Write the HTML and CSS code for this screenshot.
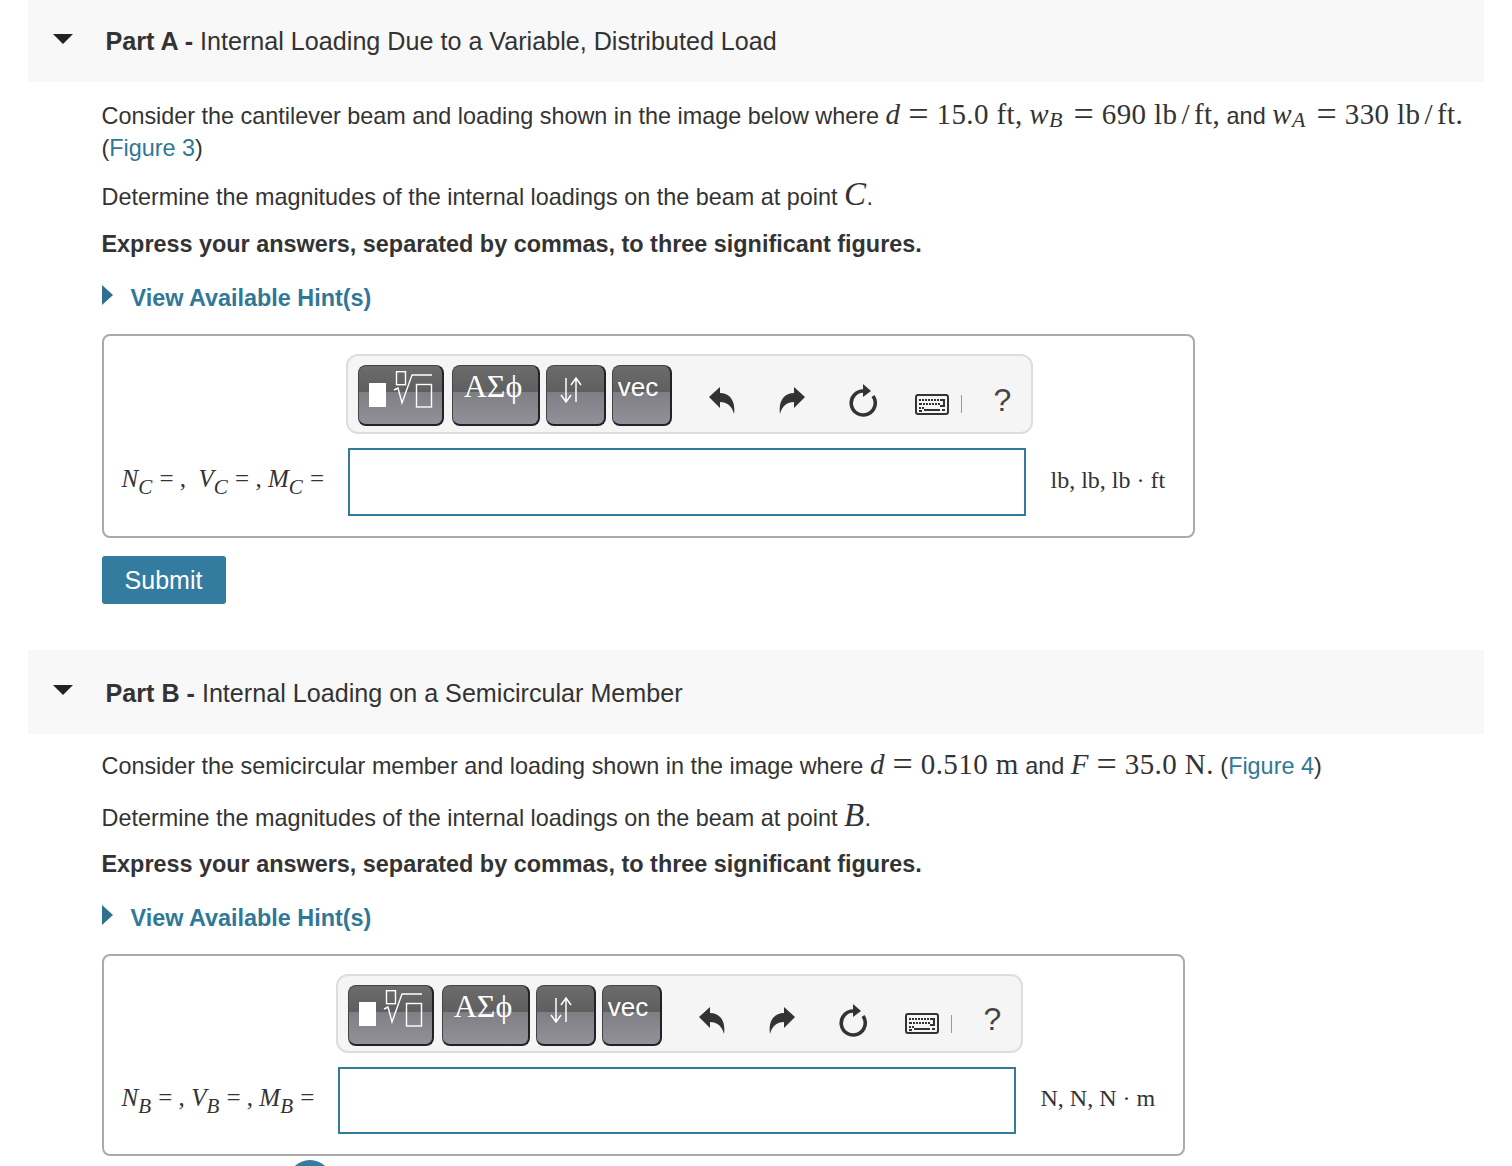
FILE: index.html
```html
<!DOCTYPE html>
<html lang="en">
<head>
  <meta charset="UTF-8">
  <title>Internal Loading Problems</title>
  <link rel="stylesheet" href="styles.css">
</head>
<body>
<svg class="sprites" width="0" height="0" aria-hidden="true">
  <symbol id="ico-undo" viewBox="0 0 26 28"><path d="M0 10 L11 0 V6 C20 6 27 13 25 27 C23 19 18 15 11 15 V21 Z"/></symbol>
  <symbol id="ico-reset" viewBox="0 0 30 34"><path d="M16 8 A12 12 0 1 0 25 13" fill="none" stroke="#333" stroke-width="3.6"/><path d="M15 1 L23 8 L15 14 Z"/></symbol>
  <symbol id="ico-kbd" viewBox="0 0 34 21">
    <rect x="1" y="1" width="32" height="19" rx="2" fill="#f5f5f5" stroke="#333" stroke-width="2"/>
    <path d="M4 5h2v2H4zM7 5h2v2H7zM10 5h2v2h-2zM13 5h2v2h-2zM16 5h2v2h-2zM19 5h2v2h-2zM22 5h2v2h-2zM25 5h5v2h-5zM4 9h3v2H4zM8 9h2v2H8zM11 9h2v2h-2zM14 9h2v2h-2zM17 9h2v2h-2zM20 9h2v2h-2zM23 9h2v2h-2zM28 7h2v6h-5v-2h3zM4 13h2v2H4zM7 13h2v2H7zM4 16h3v2H4zM9 15h16v2H9zM27 15h3v2h-3z" fill="#333"/>
  </symbol>
  <symbol id="ico-root" viewBox="0 0 64 38">
    <rect x="0" y="12" width="17" height="24" fill="#fff"/>
    <rect x="27.5" y="0.7" width="9" height="13" fill="none" stroke="#fff" stroke-width="1.4"/>
    <path d="M25 19 L29 17 L33 32 L43 4 H63" fill="none" stroke="#fff" stroke-width="1.4"/>
    <rect x="47.5" y="13.5" width="15" height="22.5" fill="none" stroke="#fff" stroke-width="1.4"/>
  </symbol>
</svg>

<div class="page">

  <section class="part">
    <header class="part-head">
      <span class="caret"></span>
      <h2><b>Part A -</b> Internal Loading Due to a Variable, Distributed Load</h2>
    </header>
    <div class="part-body">
      <p class="intro">Consider the cantilever beam and loading shown in the image below where <span class="math"><i>d</i> <span class="eq">=</span> 15.0 ft,</span> <span class="math"><i>w<sub>B</sub></i> <span class="eq">=</span> 690 lb<span class="slash">/</span>ft,</span> and <span class="math"><i>w<sub>A</sub></i> <span class="eq">=</span> 330 lb<span class="slash">/</span>ft.</span><br>(<a href="#">Figure 3</a>)</p>
      <p class="ask">Determine the magnitudes of the internal loadings on the beam at point <span class="math big"><i>C</i></span>.</p>
      <p class="express">Express your answers, separated by commas, to three significant figures.</p>
      <div class="hint"><span class="hint-arrow"></span><a href="#">View Available Hint(s)</a></div>

      <div class="answer">
        <div class="toolbar">
          <span class="tbtn tbtn-root"><svg class="root-ico"><use href="#ico-root"/></svg></span>
          <span class="tbtn tbtn-greek">ΑΣϕ</span>
          <span class="tbtn tbtn-arrows">
            <svg width="24" height="28" viewBox="0 0 24 28"><path d="M7 2 V25 M2 19 L7 26 L12 19 M17 26 V3 M12 9 L17 2 L22 9" fill="none" stroke="#fff" stroke-width="1.5"/></svg>
          </span>
          <span class="tbtn tbtn-vec">vec</span>
          <svg class="tico tico-undo"><use href="#ico-undo"/></svg>
          <svg class="tico tico-redo"><use href="#ico-undo"/></svg>
          <svg class="tico tico-reset"><use href="#ico-reset"/></svg>
          <svg class="tico tico-kbd"><use href="#ico-kbd"/></svg>
          <span class="tsep"></span>
          <span class="thelp">?</span>
        </div>
        <div class="ans-label ans-label-a"><i>N<sub>C</sub></i> = ,&nbsp; <i>V<sub>C</sub></i> = , <i>M<sub>C</sub></i> =</div>
        <input class="ans-input" type="text">
        <div class="ans-units">lb, lb, lb · ft</div>
      </div>

      <button class="submit">Submit</button>
    </div>
  </section>

  <section class="part part-b">
    <header class="part-head">
      <span class="caret"></span>
      <h2><b>Part B -</b> Internal Loading on a Semicircular Member</h2>
    </header>
    <div class="part-body">
      <p class="intro">Consider the semicircular member and loading shown in the image where <span class="math"><i>d</i> <span class="eq">=</span> 0.510 m</span> and <span class="math"><i>F</i> <span class="eq">=</span> 35.0 N.</span> (<a href="#">Figure 4</a>)</p>
      <p class="ask">Determine the magnitudes of the internal loadings on the beam at point <span class="math big"><i>B</i></span>.</p>
      <p class="express">Express your answers, separated by commas, to three significant figures.</p>
      <div class="hint"><span class="hint-arrow"></span><a href="#">View Available Hint(s)</a></div>

      <div class="answer">
        <div class="toolbar">
          <span class="tbtn tbtn-root"><svg class="root-ico"><use href="#ico-root"/></svg></span>
          <span class="tbtn tbtn-greek">ΑΣϕ</span>
          <span class="tbtn tbtn-arrows">
            <svg width="24" height="28" viewBox="0 0 24 28"><path d="M7 2 V25 M2 19 L7 26 L12 19 M17 26 V3 M12 9 L17 2 L22 9" fill="none" stroke="#fff" stroke-width="1.5"/></svg>
          </span>
          <span class="tbtn tbtn-vec">vec</span>
          <svg class="tico tico-undo"><use href="#ico-undo"/></svg>
          <svg class="tico tico-redo"><use href="#ico-undo"/></svg>
          <svg class="tico tico-reset"><use href="#ico-reset"/></svg>
          <svg class="tico tico-kbd"><use href="#ico-kbd"/></svg>
          <span class="tsep"></span>
          <span class="thelp">?</span>
        </div>
        <div class="ans-label ans-label-b"><i>N<sub>B</sub></i> = , <i>V<sub>B</sub></i> = , <i>M<sub>B</sub></i> =</div>
        <input class="ans-input" type="text">
        <div class="ans-units">N, N, N · m</div>
      </div>
    </div>
  </section>

  <span class="float-badge"></span>
</div>
</body>
</html>
```

FILE: styles.css
```css
html, body { margin: 0; height: 1166px; overflow: hidden; background: #fff; }
body { font-family: "Liberation Sans", Arial, sans-serif; color: #333; font-size: 23.4px; }
a { color: #2f7897; text-decoration: none; }
.sprites { position: absolute; }
.page { padding: 0 28px; width: 1456px; position: relative; height: 1166px; }

.part-head { display: flex; align-items: center; height: 82px; background: #f8f8f8; }
.part-b { margin-top: 46px; }
.part-b .part-head { height: 84px; }
.caret { width: 0; height: 0; margin: -4px 0 0 25px; border-left: 10px solid transparent; border-right: 10px solid transparent; border-top: 10px solid #222; }
.part-head h2 { margin: 0 0 0 32.5px; font-size: 25.15px; font-weight: normal; color: #333; }
.part-head b { font-weight: bold; }
.part-b h2 { margin-top: 2px; }

.part-body { padding: 18px 0 0 73.5px; }
.part-b .part-body { padding-top: 16px; }
.part-body p { margin: 0; line-height: 32px; }
.ask { margin-top: 17px !important; }
.express { margin-top: 15px !important; font-weight: bold; }
.part-b .ask { margin-top: 20px !important; }
.part-b .express { margin-top: 14px !important; }

.math { font-family: "Liberation Serif", "Times New Roman", serif; font-size: 29px; line-height: 0; letter-spacing: 0.4px; }
.math sub { font-size: 22px; line-height: 0; vertical-align: -3px; margin-right: 3px; }
.math.big { font-size: 33px; }
.eq { font-size: 36px; line-height: 0; vertical-align: -2px; }
.slash { margin: 0 4px; }

.hint { display: flex; align-items: center; margin-top: 22px; font-weight: bold; height: 32px; }
.hint-arrow { width: 0; height: 0; margin: -6px 18px 0 0; border-top: 10px solid transparent; border-bottom: 10px solid transparent; border-left: 11px solid #2f6f8f; }

.answer { display: grid; grid-template-columns: auto 678px auto; width: fit-content; box-sizing: border-box; margin-top: 20px; padding: 18px 28px 20px 18px; border: 2px solid #aaa; border-radius: 8px; }
.toolbar { grid-column: 2; grid-row: 1; display: flex; align-items: center; box-sizing: border-box; width: 687px; height: 80px; margin: 0 0 14px -2px; padding: 0 0 0 10px; background: #f5f5f5; border: 2px solid #ddd; border-radius: 12px; }
.part-b .toolbar { height: 79px; }
.ans-label { grid-column: 1; grid-row: 2; align-self: center; margin: 0 24px 6px 0; font-family: "Liberation Serif", "Times New Roman", serif; font-size: 25px; white-space: nowrap; color: #333; }
.ans-label sub { font-size: 21px; line-height: 0; vertical-align: -7px; margin-right: 1px; }
.ans-label-a { width: 202px; }
.ans-label-b { width: 192px; }
.ans-input { grid-column: 2; grid-row: 2; box-sizing: border-box; width: 678px; height: 68px; margin: 0; border: 2px solid #337a9c; background: #fff; outline: none; }
.part-b .ans-input { height: 67px; }
.ans-units { grid-column: 3; grid-row: 2; align-self: center; margin: 0 0 4px 25px; font-family: "Liberation Serif", "Times New Roman", serif; font-size: 24px; white-space: nowrap; }

.tbtn { display: flex; align-items: center; justify-content: center; box-sizing: border-box; height: 61px; margin: 3px 7px 0 0; padding-bottom: 4px; color: #fff; background: linear-gradient(#6c6c6c 0, #5f5f5f 44%, #7f7e84 44%, #92919a 100%); border: 1px solid #444; border-right: 2px solid #222; border-bottom: 2px solid #222; border-radius: 8px; }
.tbtn-root { width: 86px; padding: 0 0 11px 2px; margin-right: 8px; }
.root-ico { width: 64px; height: 38px; display: block; }
.tbtn-greek { width: 88px; margin-right: 6px; font-family: "Liberation Serif", serif; font-size: 32px; align-items: flex-start; padding: 2px 4px 0 0; }
.tbtn-arrows { width: 60px; margin-right: 6px; padding: 0 9px 10px 0; }
.tbtn-vec { width: 60px; font-size: 26px; align-items: flex-start; padding: 6px 6px 0 0; }

.tico { fill: #333; display: block; }
.tico-undo { width: 26px; height: 28px; margin: 14px 0 0 30px; }
.tico-redo { width: 26px; height: 28px; margin: 14px 0 0 44px; transform: scaleX(-1); }
.tico-reset { width: 30px; height: 34px; margin: 12px 0 0 43px; }
.tico-kbd { width: 34px; height: 21px; margin: 20px 0 0 37px; }
.tsep { width: 1px; height: 18px; margin: 20px 0 0 12px; background: #999; }
.thelp { margin: 12px 0 0 32px; font-size: 32px; color: #444; }

.submit { display: block; margin-top: 18px; width: 124px; height: 48px; padding: 0; border: none; border-radius: 3px; background: #337ca0; color: #fff; font: 25px "Liberation Sans", Arial, sans-serif; }

.float-badge { position: absolute; left: 288px; top: 1160px; width: 44px; height: 44px; border-radius: 50%; background: #337ca0; }
```
